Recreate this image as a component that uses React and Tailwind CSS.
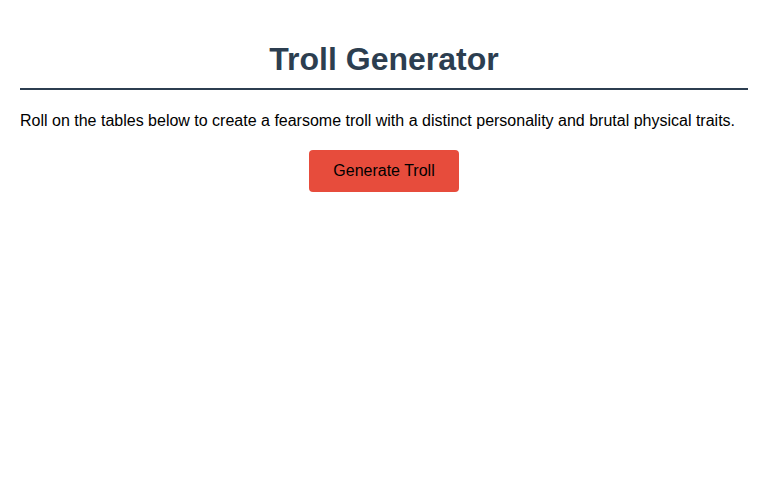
export default function App() {
  return (
    <div className="min-h-screen bg-white p-5 font-['Liberation_Sans',Arial,sans-serif] text-black">
      <h1 className="mt-[21px] border-b-2 border-[#2c3e50] pb-2.5 text-center text-[32px] leading-[37px] font-bold text-[#2c3e50]">
        Troll Generator
      </h1>
      <p className="mt-[22px] text-base leading-[18px]">
        Roll on the tables below to create a fearsome troll with a distinct personality and brutal physical traits.
      </p>
      <div className="mt-5 flex justify-center">
        <button className="rounded bg-[#e74c3c] px-6 py-3 text-base leading-[18px] text-black">
          Generate Troll
        </button>
      </div>
    </div>
  )
}
